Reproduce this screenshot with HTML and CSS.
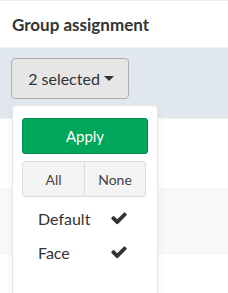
FILE: index.html
```html
<!DOCTYPE html>
<html>
<head>
<meta charset="utf-8">
<link rel="stylesheet" href="styles.css">
</head>
<body>
<div class="panel">
  <div class="header">Group assignment</div>
  <div class="rows">
    <div class="row row-sel">
      <button class="toggle">2 selected <span class="caret"></span></button>
    </div>
    <div class="row row-white"></div>
    <div class="row row-grey"></div>
    <div class="row row-white last"></div>
  </div>
  <div class="menu">
    <button class="apply">Apply</button>
    <div class="group">
      <button class="gbtn">All</button>
      <button class="gbtn">None</button>
    </div>
    <ul class="items">
      <li class="item"><span class="label">Default</span><svg class="check" viewBox="0 0 1792 1792" width="18" height="18"><path fill="#333" d="M1671 566q0 40-28 68l-724 724-136 136q-28 28-68 28t-68-28l-136-136-362-362q-28-28-28-68t28-68l136-136q28-28 68-28t68 28l294 295 656-657q28-28 68-28t68 28l136 136q28 28 28 68z"/></svg></li>
      <li class="item"><span class="label">Face</span><svg class="check" viewBox="0 0 1792 1792" width="18" height="18"><path fill="#333" d="M1671 566q0 40-28 68l-724 724-136 136q-28 28-68 28t-68-28l-136-136-362-362q-28-28-28-68t28-68l136-136q28-28 68-28t68 28l294 295 656-657q28-28 68-28t68 28l136 136q28 28 28 68z"/></svg></li>
    </ul>
  </div>
</div>
</body>
</html>
```
FILE: styles.css
```css
* { box-sizing: border-box; }
html, body { margin: 0; padding: 0; background: #fff; }
body {
  font-family: Lato, "Open Sans", sans-serif;
  color: #333;
  width: 228px;
  height: 293px;
  overflow: hidden;
}
.panel { position: relative; border-top: 1px solid #ececec; }
.header {
  height: 47px;
  padding: 0 12px;
  display: flex;
  align-items: center;
  font-weight: bold;
  font-size: 17px;
  color: #333;
  border-bottom: 1px solid #f4f4f4;
}
.rows { display: flex; flex-direction: column; }
.row { border-top: 1px solid #f4f4f4; }
.row-sel { background: #e1e7ee; height: 70px; padding: 10px 11px; border-top: none; }
.row-white { background: #fff; height: 70px; }
.row-grey { background: #f9f9f9; height: 65px; }
.row.last { height: 60px; }
.toggle {
  font-family: inherit;
  font-size: 16px;
  color: #333;
  background: #e6e6e6;
  border: 1px solid #adadad;
  border-radius: 4px;
  height: 41px;
  width: 118px;
  padding: 0 0 0 2px;
  display: flex;
  align-items: center;
  justify-content: center;
  gap: 4px;
}
.caret {
  display: inline-block;
  width: 0; height: 0;
  border-top: 5px solid #333;
  border-left: 5px solid transparent;
  border-right: 5px solid transparent;
}
.menu {
  position: absolute;
  left: 12px;
  top: 104px;
  width: 146px;
  height: 200px;
  background: #fff;
  border: 1px solid #e6e6e6;
  border-radius: 4px;
  box-shadow: 0 4px 10px rgba(0,0,0,0.06);
  padding: 12px 9px 0 9px;
}
.apply {
  display: block;
  width: 126px;
  height: 36px;
  background: #00a65a;
  color: #fff;
  border: 1px solid #008d4c;
  border-radius: 3px;
  font-family: inherit;
  font-size: 15px;
}
.group {
  display: flex;
  width: 124px;
  height: 36px;
  margin-top: 7px;
}
.gbtn {
  flex: 1;
  font-family: inherit;
  font-size: 14px;
  color: #444;
  background: #f4f4f4;
  border: 1px solid #ddd;
}
.gbtn:first-child { border-radius: 3px 0 0 3px; flex: 0 0 63px; }
.gbtn:last-child { border-radius: 0 3px 3px 0; border-left: none; }
.items { list-style: none; margin: 0; padding: 0; }
.item {
  height: 34px;
  display: flex;
  align-items: center;
  padding-left: 16px;
  font-size: 16px;
  color: #333;
}
.item:first-child { margin-top: 4px; }
.label { width: 72px; }
.check { display: block; }
```
